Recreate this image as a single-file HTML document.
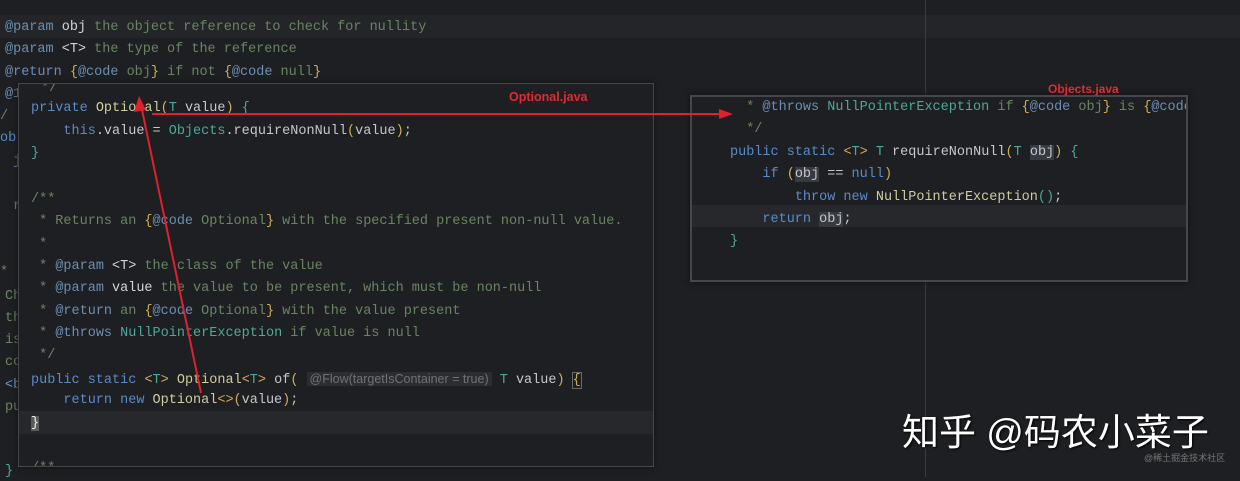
<!DOCTYPE html>
<html><head><meta charset="utf-8"><style>
*{margin:0;padding:0}
body{width:1240px;height:477px;background:#1e1f22;position:relative;overflow:hidden;font-family:"Liberation Mono",monospace;font-size:13.5px;color:#c4c7cc}
.l{position:absolute;white-space:pre;line-height:18px;margin-top:2px}
.c{color:#6a8463}.t{color:#6a8fb3}.k{color:#5a8acb}.y{color:#d2ae55}.o{color:#cfcc9f}.g{color:#4ba99a}.w{color:#d3d5da}.b{color:#6a97d0}
.pop{position:absolute;background:#1e1f22;border:1px solid #45474a;box-shadow:0 0 6px #111;overflow:hidden}
.hl{position:absolute;left:0;right:0;background:#26282c}
</style></head><body>
<div class="hl" style="top:15px;height:23px;background:#232529"></div>
<div style="position:absolute;left:925px;top:0;width:1px;height:477px;background:#3a3b3e"></div>
<div class="l" style="left:5px;top:17px"><span class="t">@param</span> <span class="w">obj</span> <span class="c">the object reference to check for nullity</span></div>
<div class="l" style="left:5px;top:39px"><span class="t">@param</span> <span class="w">&lt;T&gt;</span> <span class="c">the type of the reference</span></div>
<div class="l" style="left:5px;top:62px"><span class="t">@return</span> <span class="y">{</span><span class="t">@code</span> <span class="c">obj</span><span class="y">}</span> <span class="c">if not</span> <span class="y">{</span><span class="t">@code</span> <span class="c">null</span><span class="y">}</span></div>
<div class="l t" style="left:5px;top:84px">@1</div>
<div class="l c" style="left:0;top:106px">/</div>
<div class="l k" style="left:0;top:128px">obli</div>
<div class="l k" style="left:13px;top:151px">j</div>
<div class="l k" style="left:13px;top:196px">r</div>
<div class="l c" style="left:0;top:262px">*</div>
<div class="l c" style="left:5px;top:286px">Ch</div>
<div class="l c" style="left:5px;top:308px">th</div>
<div class="l c" style="left:5px;top:330px">is</div>
<div class="l c" style="left:5px;top:352px">cc</div>
<div class="l b" style="left:5px;top:375px">&lt;b</div>
<div class="l c" style="left:5px;top:397px">pu</div>
<div class="l g" style="left:5px;top:461px">}</div>

<div class="pop" style="left:18px;top:83px;width:634px;height:382px">
<div class="hl" style="top:327px;height:23px"></div>
<div class="l c" style="left:22px;top:-6px">*/</div>
<div class="l" style="left:12px;top:14px"><span class="k">private</span> <span class="o">Optional</span><span class="y">(</span><span class="g">T</span> value<span class="y">)</span> <span class="g">{</span></div>
<div class="l" style="left:12px;top:37px">    <span class="k">this</span>.value = <span class="g">Objects</span>.requireNonNull<span class="y">(</span>value<span class="y">)</span>;</div>
<div class="l g" style="left:12px;top:59px">}</div>
<div class="l c" style="left:12px;top:105px">/**</div>
<div class="l c" style="left:12px;top:127px"> * Returns an <span class="y">{</span><span class="t">@code</span> Optional<span class="y">}</span> with the specified present non-null value.</div>
<div class="l c" style="left:12px;top:150px"> *</div>
<div class="l c" style="left:12px;top:172px"> * <span class="t">@param</span> <span class="w">&lt;T&gt;</span> the class of the value</div>
<div class="l c" style="left:12px;top:194px"> * <span class="t">@param</span> <span class="w">value</span> the value to be present, which must be non-null</div>
<div class="l c" style="left:12px;top:217px"> * <span class="t">@return</span> an <span class="y">{</span><span class="t">@code</span> Optional<span class="y">}</span> with the value present</div>
<div class="l c" style="left:12px;top:239px"> * <span class="t">@throws</span> <span class="g">NullPointerException</span> if value is null</div>
<div class="l c" style="left:12px;top:261px"> */</div>
<div class="l" style="left:12px;top:284px"><span class="k">public static</span> <span class="y">&lt;</span><span class="g">T</span><span class="y">&gt;</span> <span class="o">Optional</span><span class="y">&lt;</span><span class="g">T</span><span class="y">&gt;</span> of<span class="y">(</span> <span style="font-family:'Liberation Sans',sans-serif;font-size:12.5px;color:#6f7277;background:#2b2d30;padding:0 3px">@Flow(targetIsContainer = true)</span> <span class="g">T</span> value<span class="y">)</span> <span class="y" style="outline:1px solid #6a6c60">{</span></div>
<div class="l" style="left:12px;top:306px">    <span class="k">return new</span> <span class="o">Optional</span><span class="y">&lt;&gt;(</span>value<span class="y">)</span>;</div>
<div class="l" style="left:12px;top:329px"><span style="background:#5a5c5a;color:#eee">}</span></div>
<div class="l c" style="left:12px;top:374px">/**</div>
</div>

<div class="pop" style="left:690px;top:95px;width:494px;height:183px;border:2px solid #45474a">
<div class="hl" style="top:108px;height:22px"></div>
<div class="l c" style="left:38px;top:0px">  * <span class="t">@throws</span> <span class="g">NullPointerException</span> if <span class="y">{</span><span class="t">@code</span> obj<span class="y">}</span> is <span class="y">{</span><span class="t">@code</span></div>
<div class="l c" style="left:38px;top:22px">  */</div>
<div class="l" style="left:38px;top:45px"><span class="k">public static</span> <span class="y">&lt;</span><span class="g">T</span><span class="y">&gt;</span> <span class="g">T</span> requireNonNull<span class="y">(</span><span class="g">T</span> <span style="background:#373b41">obj</span><span class="y">)</span> <span class="g">{</span></div>
<div class="l" style="left:38px;top:67px">    <span class="k">if</span> <span class="y">(</span><span style="background:#373b41">obj</span> == <span class="k">null</span><span class="y">)</span></div>
<div class="l" style="left:38px;top:90px">        <span class="k">throw new</span> <span class="o">NullPointerException</span><span class="g">()</span>;</div>
<div class="l" style="left:38px;top:112px">    <span class="k">return</span> <span style="background:#373b41">obj</span>;</div>
<div class="l g" style="left:38px;top:134px">}</div>
</div>

<svg style="position:absolute;left:0;top:0" width="1240" height="477">
<g stroke="#e0202c" stroke-width="2" fill="#e0202c">
<line x1="201" y1="393" x2="141" y2="105"/>
<polygon points="139,96 134,112 146,110" stroke="none"/>
<line x1="152" y1="114" x2="722" y2="114"/>
<polygon points="733,114 719,109 719,119" stroke="none"/>
</g>
<text x="509" y="101" fill="#e02a35" font-family="Liberation Sans,sans-serif" font-size="12.5" font-weight="bold">Optional.java</text>
<text x="1048" y="93" fill="#e02a35" font-family="Liberation Sans,sans-serif" font-size="12" font-weight="bold">Objects.java</text>
</svg>
<div style="position:absolute;left:902px;top:402px;font-family:'Liberation Sans','Noto Sans CJK SC',sans-serif;font-size:37px;color:#fff;white-space:nowrap;text-shadow:1px 1px 2px #000">知乎 @码农小菜子</div>
<div style="position:absolute;left:1144px;top:451px;font-family:'Liberation Sans','Noto Sans CJK SC',sans-serif;font-size:9px;color:#777;white-space:nowrap">@稀土掘金技术社区</div>
</body></html>
